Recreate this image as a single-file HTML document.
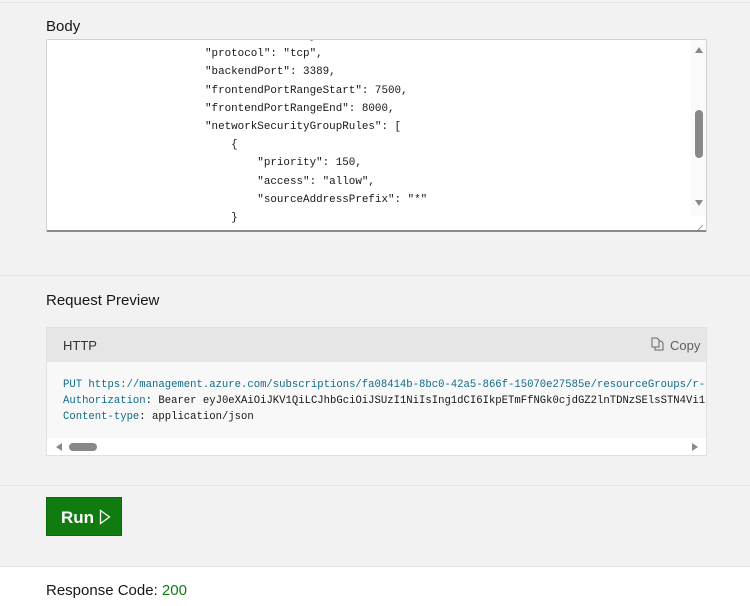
<!DOCTYPE html>
<html><head><meta charset="utf-8"><style>
*{margin:0;padding:0;box-sizing:border-box}
body{width:750px;height:606px;background:#f2f2f2;font-family:"Liberation Sans",sans-serif;color:#171717;position:relative;overflow:hidden}
.abs{position:absolute}
.h{font-size:15px;color:#171717}
.mono{font-family:"Liberation Mono",monospace;white-space:pre}
.line{position:absolute;left:0;width:750px;height:1px;background:#e3e3e3}
</style></head><body>
<div class="line" style="top:2px"></div>
<div class="abs h" style="left:46px;top:18px">Body</div>
<div class="abs" style="left:46px;top:39px;width:661px;height:193px;background:#fff;border:1px solid #d0d0d0;border-bottom:2px solid #8a8a8a;border-radius:2px;overflow:hidden">
 <div class="abs mono" style="left:158px;top:-13px;font-size:10.9px;line-height:18.2px;color:#171717">                },
"protocol": "tcp",
"backendPort": 3389,
"frontendPortRangeStart": 7500,
"frontendPortRangeEnd": 8000,
"networkSecurityGroupRules": [
    {
        "priority": 150,
        "access": "allow",
        "sourceAddressPrefix": "*"
    }</div>
 <div class="abs" style="right:0;top:0;width:15px;height:176px;background:#fafafa"></div>
 <div class="abs" style="right:3px;top:7px;width:0;height:0;border-left:4px solid transparent;border-right:4px solid transparent;border-bottom:6px solid #888"></div>
 <div class="abs" style="right:3px;top:160px;width:0;height:0;border-left:4px solid transparent;border-right:4px solid transparent;border-top:6px solid #888"></div>
 <div class="abs" style="right:3px;top:70px;width:8px;height:48px;background:#888;border-radius:4px"></div>
 <div class="abs" style="right:2px;bottom:2px;width:7px;height:1px;background:#999;transform:rotate(-45deg)"></div>
</div>
<div class="line" style="top:275px"></div>
<div class="abs h" style="left:46px;top:292px">Request Preview</div>
<div class="abs" style="left:46px;top:327px;width:661px;height:129px;background:#f8f8f8;border:1px solid #e0e0e0;overflow:hidden">
 <div class="abs" style="left:0;top:0;width:661px;height:34px;background:#e6e6e6"></div>
 <div class="abs" style="left:16px;top:10px;font-size:13px;color:#323130">HTTP</div>
 <svg class="abs" style="left:604px;top:9px" width="13" height="14" viewBox="0 0 13 14"><path d="M1 1h5l2 2v7H1z M8 4h2l2 2v7H4v-3" fill="none" stroke="#666" stroke-width="1"/></svg>
 <div class="abs" style="left:623px;top:10px;font-size:13px;color:#605e5c">Copy</div>
 <div class="abs mono" style="left:16px;top:49px;font-size:10.6px;line-height:16px;color:#171717"><span style="color:#0f6b8a">PUT https://management.azure.com/subscriptions/fa08414b-8bc0-42a5-866f-15070e27585e/resourceGroups/r-</span>
<span style="color:#0f6b8a">Authorization</span>: Bearer eyJ0eXAiOiJKV1QiLCJhbGciOiJSUzI1NiIsIng1dCI6IkpETmFfNGk0cjdGZ2lnTDNzSElsSTN4Vi1
<span style="color:#0f6b8a">Content-type</span>: application/json</div>
 <div class="abs" style="left:0;top:110px;width:661px;height:18px;background:#fff"></div>
 <div class="abs" style="left:9px;top:115px;width:0;height:0;border-top:4px solid transparent;border-bottom:4px solid transparent;border-right:6px solid #888"></div>
 <div class="abs" style="left:22px;top:115px;width:28px;height:8px;background:#888;border-radius:4px"></div>
 <div class="abs" style="left:645px;top:115px;width:0;height:0;border-top:4px solid transparent;border-bottom:4px solid transparent;border-left:6px solid #888"></div>
</div>
<div class="line" style="top:485px"></div>
<div class="abs" style="left:46px;top:497px;width:76px;height:39px;background:#107c10;border:1px solid #0b6a0b;color:#fff;font-size:17px;font-weight:bold;padding:10px 0 0 14px">Run <svg width="12" height="16" viewBox="0 0 12 16" style="vertical-align:-2px"><path d="M1.5 1.5L10.5 8L1.5 14.5Z" fill="none" stroke="#fff" stroke-width="1.3"/></svg></div>
<div class="abs" style="left:0;top:566px;width:750px;height:40px;background:#fff;border-top:1px solid #e3e3e3"></div>
<div class="abs" style="left:46px;top:582px;font-size:15px;color:#171717">Response Code: <span style="color:#107c10">200</span></div>
</body></html>
